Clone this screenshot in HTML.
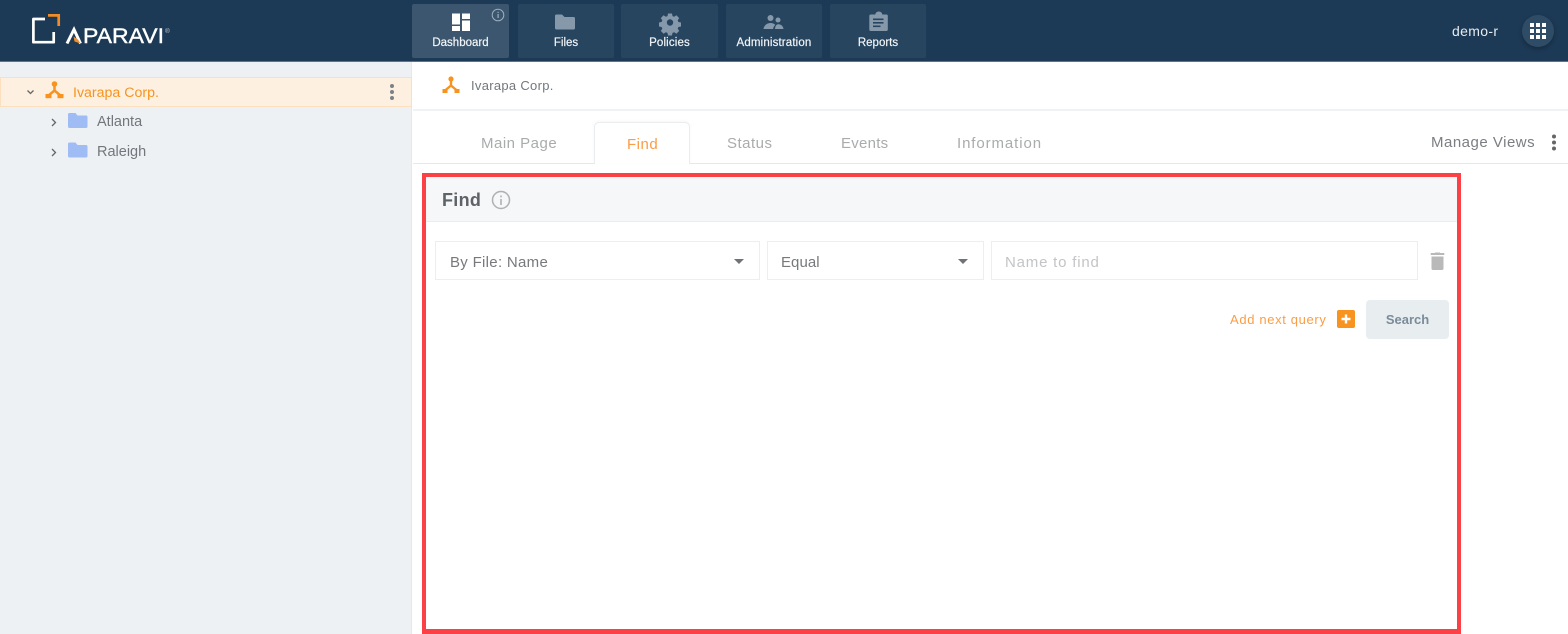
<!DOCTYPE html>
<html><head><meta charset="utf-8">
<style>
html,body{margin:0;padding:0;background:#fff}
#r{position:relative;width:1568px;height:634px;overflow:hidden;background:#fff;font-family:"Liberation Sans",sans-serif}
.a{position:absolute;box-sizing:border-box}
.t{position:absolute;white-space:nowrap;line-height:20px;height:20px}
.nav{position:absolute;top:4px;height:54px;background:#27455f;border-radius:2px}
.nl{position:absolute;top:32px;left:0;right:0;text-align:center;color:#f2f5f7;font-size:11.500px;line-height:14px;-webkit-text-stroke:.2px #f2f5f7}
.sel{position:absolute;top:241px;height:39px;border:1px solid #ebeff1;box-sizing:border-box;background:#fff}
.car{position:absolute;width:0;height:0;border-left:5.500px solid transparent;border-right:5.500px solid transparent;border-top:5px solid #6f7276}
svg{position:absolute;overflow:visible}
</style></head><body><div id="r">
<!-- header -->
<div class="a" style="left:0;top:0;width:1568px;height:61px;background:#1c3955"></div>
<div class="a" style="left:0;top:61px;width:1568px;height:1px;background:#5e7488"></div>
<svg style="left:0;top:0" width="200" height="60">
<path d="M45 19H33.400V42.200H53.700V32" fill="none" stroke="#fff" stroke-width="2.700" stroke-linejoin="round"/>
<path d="M48 15.400H58.700V26" fill="none" stroke="#f28c28" stroke-width="2.700"/>
<path d="M67 43.500L74 29.500L80.500 43.500" fill="none" stroke="#fff" stroke-width="3"/>
<path d="M73.500 36.500L78 39.500L80.500 43.500L74.500 41.500Z" fill="#f28c28"/>
<text x="83" y="43" font-family="Liberation Sans" font-size="21" fill="#fff" stroke="#fff" stroke-width=".4" textLength="81" lengthAdjust="spacingAndGlyphs">PARAVI</text>
<text x="165" y="33" font-family="Liberation Sans" font-size="6.500" fill="#c5ced6">®</text>
</svg>
<!-- nav -->
<div class="nav" style="left:412px;width:97px;background:#3b566e"><div class="nl">Dashboard</div></div>
<div class="nav" style="left:518px;width:96px"><div class="nl">Files</div></div>
<div class="nav" style="left:621px;width:97px"><div class="nl" style="letter-spacing:.15px">Policies</div></div>
<div class="nav" style="left:726px;width:96px"><div class="nl" style="letter-spacing:.15px">Administration</div></div>
<div class="nav" style="left:830px;width:96px"><div class="nl">Reports</div></div>
<svg style="left:0;top:0" width="1000" height="60">
<g fill="#fff"><rect x="452" y="13.500" width="8" height="11"/><rect x="462" y="13.500" width="8" height="5.500"/><rect x="462" y="20.500" width="8" height="10.500"/><rect x="452" y="26" width="8" height="5"/></g>
<circle cx="498" cy="15" r="5.800" fill="none" stroke="#9fb0be" stroke-width="1"/>
<rect x="497.500" y="14" width="1.200" height="4" fill="#9fb0be"/><rect x="497.500" y="11.800" width="1.200" height="1.200" fill="#9fb0be"/>
<path d="M555 16a1.500 1.500 0 0 1 1.500-1.500h5.500l2.500 2.500h9a1.500 1.500 0 0 1 1.500 1.500v9.500a1.500 1.500 0 0 1-1.500 1.500h-17a1.500 1.500 0 0 1-1.500-1.500z" fill="#8599aa"/>
<g transform="translate(660.500,13.500)" fill="#8599aa"><path d="M7.500 0h4l.5 2.600 1.700.7 2.200-1.500 2.800 2.800-1.500 2.200.7 1.700 2.600.5v4l-2.600.5-.7 1.700 1.500 2.200-2.800 2.800-2.200-1.500-1.700.7-.5 2.600h-4l-.5-2.600-1.700-.7-2.200 1.500-2.800-2.800 1.500-2.200-.7-1.700-2.600-.5v-4l2.600-.5.7-1.700-1.500-2.200 2.800-2.800 2.200 1.500 1.700-.7z"/><circle cx="9.500" cy="9" r="3.200" fill="#27455f"/></g>
<g fill="#8599aa"><circle cx="770.500" cy="18" r="3"/><path d="M763.500 29c.5-3.500 3.200-6 7-6 2 0 3.700.7 4.800 2-1.300 1-2 2.400-2.200 4z"/><circle cx="778" cy="20" r="2.500"/><path d="M775 29c0-2 .8-3.600 2-4.500 3-1 6 1 6.500 4.500z"/></g>
<path d="M870.800 14.500h4.500a3.500 3 0 0 1 7 0h4a1.500 1.500 0 0 1 1.500 1.500v13.500a1.500 1.500 0 0 1-1.500 1.500h-15.500a1.500 1.500 0 0 1-1.500-1.500v-13.500a1.500 1.500 0 0 1 1.500-1.500z" fill="#8599aa"/>
<g fill="#27455f"><rect x="873" y="18.500" width="10.500" height="1.600"/><rect x="873" y="22" width="10.500" height="1.600"/><rect x="873" y="25.500" width="7.500" height="1.600"/></g>
</svg>
<div class="t" style="left:1452px;top:21px;color:#e6ecf1;font-size:14px;letter-spacing:.35px">demo-r</div>
<div class="a" style="left:1522px;top:15px;width:32px;height:32px;border-radius:50%;background:#2f4c66;box-shadow:0 2px 4px rgba(0,0,0,.25)"></div>
<svg style="left:1530px;top:23px" width="16" height="16" fill="#fff">
<rect x="0" y="0" width="4" height="4"/><rect x="6" y="0" width="4" height="4"/><rect x="12" y="0" width="4" height="4"/>
<rect x="0" y="6" width="4" height="4"/><rect x="6" y="6" width="4" height="4"/><rect x="12" y="6" width="4" height="4"/>
<rect x="0" y="12" width="4" height="4"/><rect x="6" y="12" width="4" height="4"/><rect x="12" y="12" width="4" height="4"/>
</svg>
<!-- sidebar -->
<div class="a" style="left:0;top:62px;width:412px;height:572px;background:#edf1f4;border-right:1px solid #e4e9ed"></div>
<div class="a" style="left:0;top:77px;width:412px;height:30px;background:#fef0e0;border:1px solid #fcdfbc"></div>
<svg style="left:0;top:0" width="412" height="170">
<path d="M27.500 90.500L30.500 93.500L33.500 90.500" fill="none" stroke="#666" stroke-width="1.300"/>
<circle cx="54.500" cy="84" r="2.800" fill="#f7931e"/><path d="M54.500 85V90.500L48 96M54.500 90.500L61 96" stroke="#f7931e" stroke-width="2.500" fill="none"/><rect x="45.500" y="94" width="6" height="4.200" fill="#f7931e"/><rect x="57.500" y="94" width="6" height="4.200" fill="#f7931e"/>
<g fill="#7b8289"><circle cx="392" cy="86" r="2"/><circle cx="392" cy="92" r="2"/><circle cx="392" cy="98" r="2"/></g>
<path d="M52 119L55.500 122.500L52 126" fill="none" stroke="#666" stroke-width="1.300"/>
<path d="M52 149L55.500 152.500L52 156" fill="none" stroke="#666" stroke-width="1.300"/>
<path d="M68 114.500a1.500 1.500 0 0 1 1.500-1.500h6l2 2.500h8.500a1.500 1.500 0 0 1 1.500 1.500v9.500a1.500 1.500 0 0 1-1.500 1.500h-16.500a1.500 1.500 0 0 1-1.500-1.500z" fill="#a0bcf5"/>
<path d="M68 144a1.500 1.500 0 0 1 1.500-1.500h6l2 2.500h8.500a1.500 1.500 0 0 1 1.500 1.500v9.500a1.500 1.500 0 0 1-1.500 1.500h-16.500a1.500 1.500 0 0 1-1.500-1.500z" fill="#a0bcf5"/>
</svg>
<div class="t" style="left:73px;top:83px;color:#f7931e;font-size:14.200px">Ivarapa Corp.</div>
<div class="t" style="left:97px;top:112px;color:#72777c;font-size:14.500px">Atlanta</div>
<div class="t" style="left:97px;top:142px;color:#72777c;font-size:14.500px">Raleigh</div>
<!-- breadcrumb -->
<div class="a" style="left:413px;top:109px;width:1155px;height:2px;background:#f0f2f4"></div>
<svg style="left:0;top:0" width="480" height="100">
<circle cx="451" cy="79" r="2.600" fill="#f7931e"/><path d="M451 80V85.500L445 90.500M451 85.500L457 90.500" stroke="#f7931e" stroke-width="2.400" fill="none"/><rect x="442.500" y="89" width="5" height="4" fill="#f7931e"/><rect x="454.500" y="89" width="5" height="4" fill="#f7931e"/>
</svg>
<div class="t" style="left:471px;top:76px;color:#73787d;font-size:13px;letter-spacing:.3px">Ivarapa Corp.</div>
<!-- tabs -->
<div class="a" style="left:413px;top:163px;width:1155px;height:1px;background:#e3e9ec"></div>
<div class="a" style="left:594px;top:122px;width:96px;height:42px;background:#fff;border:1px solid #e9edf0;border-bottom:none;border-radius:5px 5px 0 0;box-shadow:0 -1px 3px rgba(0,0,0,.04)"></div>
<div class="t" style="left:481px;top:134px;color:#a9abac;font-size:15px;letter-spacing:.5px">Main Page</div>
<div class="t" style="left:627px;top:135px;color:#fb9d45;font-size:15px;letter-spacing:.5px">Find</div>
<div class="t" style="left:727px;top:134px;color:#a9abac;font-size:15px;letter-spacing:.5px">Status</div>
<div class="t" style="left:841px;top:134px;color:#a9abac;font-size:15px;letter-spacing:.25px">Events</div>
<div class="t" style="left:957px;top:134px;color:#a9abac;font-size:15px;letter-spacing:.9px">Information</div>
<div class="t" style="left:1431px;top:133px;color:#7b7e82;font-size:15px;letter-spacing:.5px">Manage Views</div>
<svg style="left:1548px;top:134px" width="12" height="18" fill="#666"><circle cx="6" cy="2.500" r="2"/><circle cx="6" cy="8.500" r="2"/><circle cx="6" cy="14.500" r="2"/></svg>
<!-- find panel -->
<div class="a" style="left:426px;top:177px;width:1031px;height:45px;background:#f6f7f9;border-bottom:1px solid #e9edef"></div>
<div class="a" style="left:422px;top:173px;width:1039px;height:461px;border:4px solid #fb4146;border-bottom-width:5px"></div>
<div class="t" style="left:442px;top:190px;color:#5f6368;font-size:18px;font-weight:bold;letter-spacing:.3px">Find</div>
<svg style="left:490px;top:189px" width="22" height="22"><circle cx="11" cy="11" r="8.500" fill="none" stroke="#aeb0b2" stroke-width="1.500"/><rect x="10.200" y="10" width="1.600" height="6" fill="#aeb0b2"/><rect x="10.200" y="6.500" width="1.600" height="1.800" fill="#aeb0b2"/></svg>
<div class="sel" style="left:435px;width:325px"></div>
<div class="sel" style="left:767px;width:217px"></div>
<div class="sel" style="left:991px;width:427px"></div>
<div class="t" style="left:450px;top:253px;color:#77797c;font-size:15px;letter-spacing:.3px">By File: Name</div>
<div class="t" style="left:781px;top:253px;color:#77797c;font-size:15px;letter-spacing:.05px">Equal</div>
<div class="t" style="left:1005px;top:253px;color:#c2c4c6;font-size:15px;letter-spacing:.8px">Name to find</div>
<div class="car" style="left:734px;top:259px"></div>
<div class="car" style="left:958px;top:259px"></div>
<svg style="left:1429px;top:251px" width="18" height="20" fill="#b9b9b9"><rect x="1.700" y="2" width="13.600" height="2"/><rect x="6" y="1.500" width="5" height="2"/><path d="M2.500 5.500H14.500V17.500a1.500 1.500 0 0 1-1.500 1.500H4a1.500 1.500 0 0 1-1.500-1.500z"/></svg>
<div class="t" style="left:1230px;top:310px;color:#fb9d45;font-size:13px;letter-spacing:.65px">Add next query</div>
<div class="a" style="left:1337px;top:310px;width:18px;height:18px;background:#f7931e;border-radius:2px"></div>
<svg style="left:1337px;top:310px" width="18" height="18"><path d="M9 4.500V13.500M4.500 9H13.500" stroke="#fff" stroke-width="2.400"/></svg>
<div class="a" style="left:1366px;top:300px;width:83px;height:39px;background:#e8edf0;border-radius:4px"></div>
<div class="t" style="left:1366px;top:310px;width:83px;text-align:center;color:#7a8b99;font-size:13px;font-weight:bold">Search</div>
</div></body></html>
